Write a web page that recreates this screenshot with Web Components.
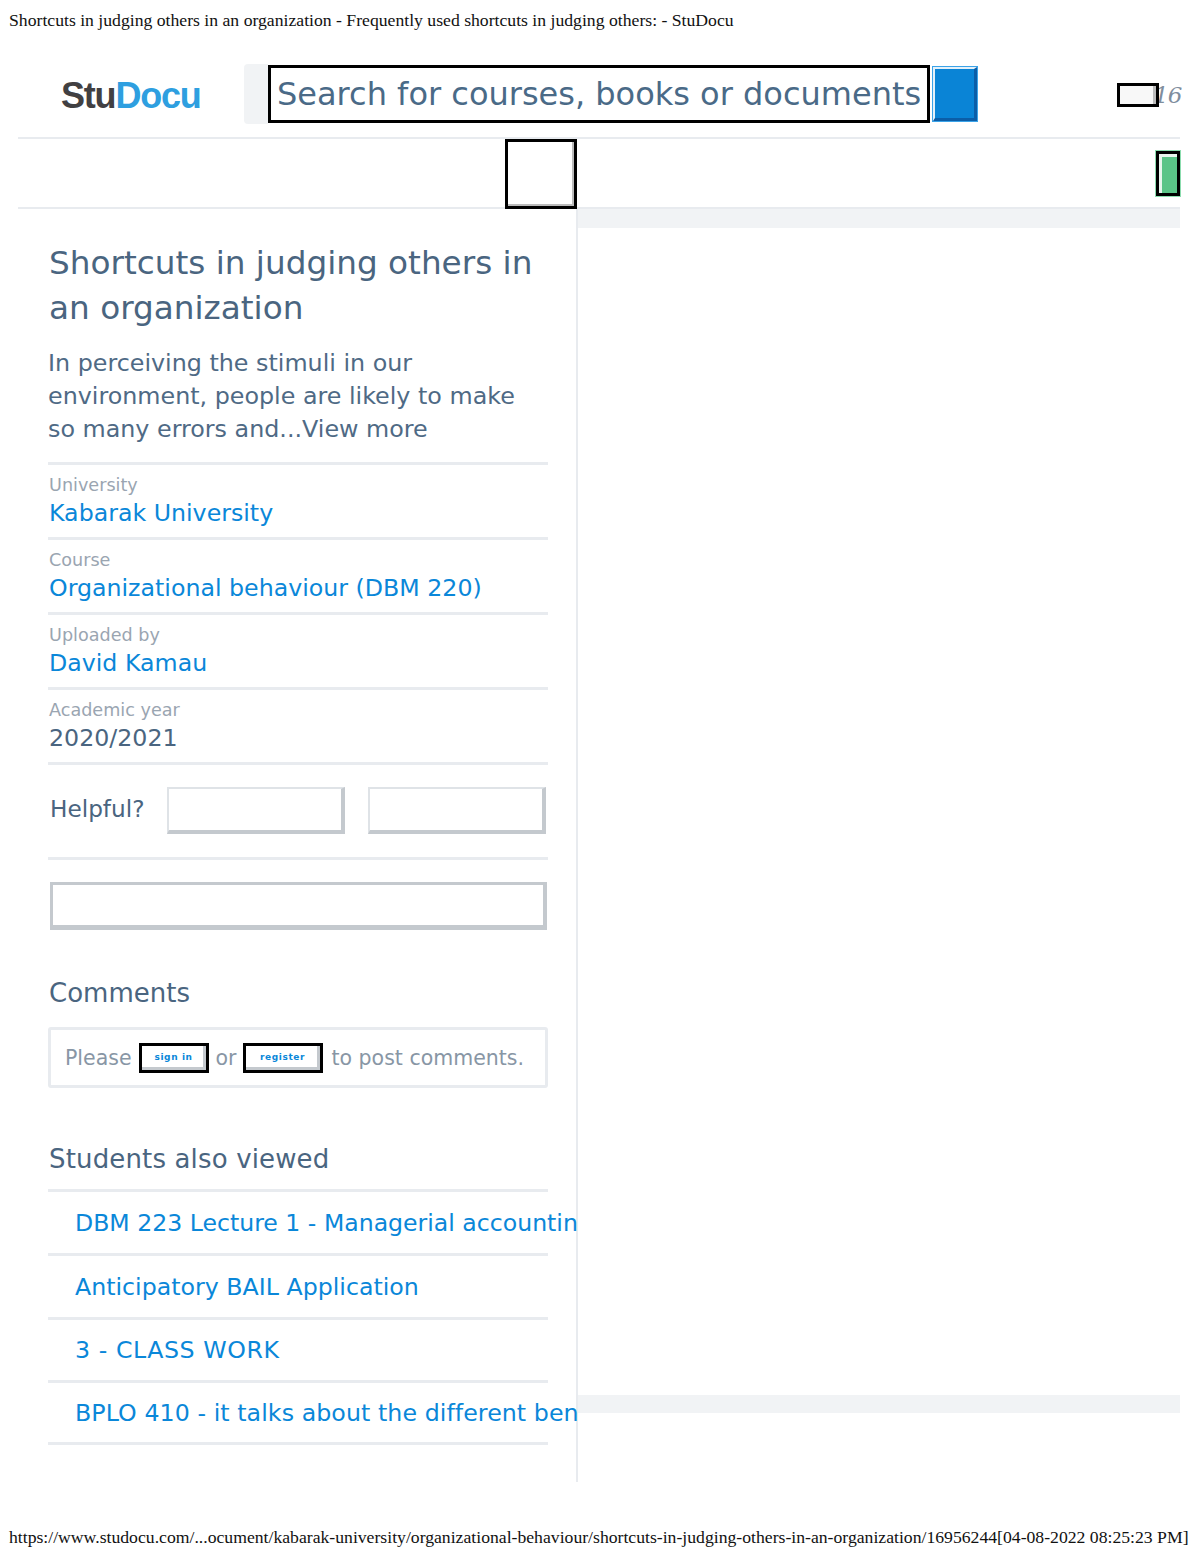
<!DOCTYPE html>
<html>
<head>
<meta charset="utf-8">
<title>Shortcuts in judging others in an organization - StuDocu</title>
<style>
	html, body { margin: 0; background: #fff; }
	body { width: 1200px; height: 1553px; overflow: hidden; font-family: "DejaVu Sans", sans-serif; color: #4a6580; display: flex; flex-direction: column; }
</style>
</head>
<body>
<print-line style="height:50px;padding-top:10px">Shortcuts in judging others in an organization - Frequently used shortcuts in judging others: - StuDocu</print-line>
<doc-frame>
	<site-header></site-header>
	<doc-toolbar></doc-toolbar>
	<doc-main>
		<doc-title slot="side">Shortcuts in judging others in an organization</doc-title>
		<doc-desc slot="side">In perceiving the stimuli in our environment, people are likely to make so many errors and...View more</doc-desc>
		<meta-row slot="side" label="University" link>Kabarak University</meta-row>
		<meta-row slot="side" label="Course" link>Organizational behaviour (DBM 220)</meta-row>
		<meta-row slot="side" label="Uploaded by" link>David Kamau</meta-row>
		<meta-row slot="side" label="Academic year">2020/2021</meta-row>
		<helpful-row slot="side"></helpful-row>
		<comment-box slot="side"></comment-box>
		<related-list slot="side">
			<related-item style="font-size:23.6px">DBM 223 Lecture 1 - Managerial accountin</related-item>
			<related-item>Anticipatory BAIL Application</related-item>
			<related-item style="height:63px;line-height:60px;letter-spacing:.55px">3 - CLASS WORK</related-item>
			<related-item style="height:62px;line-height:60px;letter-spacing:.07px">BPLO 410 - it talks about the different ben</related-item>
		</related-list>
	</doc-main>
</doc-frame>
<print-line style="margin-top:45px">https://www.studocu.com/...ocument/kabarak-university/organizational-behaviour/shortcuts-in-judging-others-in-an-organization/16956244[04-08-2022 08:25:23 PM]</print-line>

<script>
	// small helper, every element is just a shadow root with a style and some markup
	function comp(name, html) {
		customElements.define(name, class extends HTMLElement {
			constructor() {
				super();
				this.attachShadow({ mode: "open" });
			}
			connectedCallback() {
				this.shadowRoot.innerHTML = typeof html === "function" ? html(this) : html;
			}
		});
	}

	comp("print-line", `<style>
		:host { display: block; box-sizing: border-box; padding-left: 9px; font: 17.68px/20px "Liberation Serif", serif; color: #111; white-space: nowrap; }
	</style><slot></slot>`);

	comp("doc-frame", `<style>
		:host { display: block; margin: 0 20px 0 18px; }
	</style><slot></slot>`);

	comp("site-header", `<style>
		:host { display: flex; align-items: flex-start; height: 89px; padding-top: 14px; box-sizing: border-box; border-bottom: 2px solid #e8ebef; }
		.logo { width: 226px; padding-left: 43px; box-sizing: border-box; font: bold 36px/64px "Liberation Sans", sans-serif; letter-spacing: -1.2px; color: #414042; }
		.logo b { color: #2e9fe0; }
		.search { display: flex; padding-left: 24px; height: 60px; border-radius: 4px 0 0 4px; background: linear-gradient(#f1f3f5, #f1f3f5) left / 24px 100% no-repeat; }
		.input { width: 662px; height: 58px; box-sizing: border-box; margin-top: 1px; border: 3px solid #000; background: #fff; font-size: 32px; line-height: 53px; padding-left: 6px; color: #4a6a87; white-space: nowrap; overflow: hidden; }
		.go { width: 44px; height: 54px; margin: 3px 0 0 3px; box-sizing: border-box; background: #0a84d6; border-style: solid; border-width: 2px 3px 3px 2px; border-color: #e4f1fa #0b5ea8 #0b5ea8 #e4f1fa; outline: 1px solid #3ba3e8; }
		.pages { margin-left: auto; display: flex; align-items: center; height: 60px; padding-top: 1px; box-sizing: border-box; margin-right: -2px; }
		.box { width: 42px; height: 24px; box-sizing: border-box; border: 3px solid #000; background: #f8f8f8; box-shadow: inset -3px 0 0 #bbb; position: relative; z-index: 1; }
		.num { font: italic 23px "DejaVu Serif", serif; color: #7f8e9e; margin-left: -5px; letter-spacing: -1px; width: 28px; overflow: hidden; }
	</style>
	<div class="logo">Stu<b>Docu</b></div>
	<div class="search"><div class="input">Search for courses, books or documents</div><div class="go"></div></div>
	<div class="pages"><div class="box"></div><div class="num">16</div></div>`);

	comp("doc-toolbar", `<style>
		:host { display: flex; height: 70px; box-sizing: border-box; border-bottom: 2px solid #e8ebef; }
		.sq { width: 72px; height: 70px; margin-left: 487px; box-sizing: border-box; border: 3px solid #000; background: #fff; box-shadow: inset -2px -2px 0 #bbb; }
		.green { width: 24px; height: 45px; margin: 12px 0 0 auto; box-sizing: border-box; border: 3px solid #000; background: #5ac487; box-shadow: inset 3px 3px 0 #e8f5ed; outline: 1px solid #8bdcae; }
	</style><div class="sq"></div><div class="green"></div>`);

	comp("doc-main", `<style>
		:host { display: grid; grid-template-columns: 560px 1fr; height: 1273px; }
		.side { background: linear-gradient(#e8ebef, #e8ebef) right / 2px 100% no-repeat; padding: 31px 30px 0 30px; overflow: hidden; box-sizing: border-box; }
		.band { height: 19px; background: #f1f3f5; }
		.band.low { margin-top: 1167px; height: 18px; }
	</style>
	<div class="side"><slot name="side"></slot></div>
	<div class="view"><div class="band"></div><div class="band low"></div></div>`);

	comp("doc-title", `<style>
		:host { display: block; font-size: 32.7px; line-height: 45px; color: #4a6580; margin-bottom: 16px; padding: 1px 0 0 1px; }
	</style><slot></slot>`);

	comp("doc-desc", `<style>
		:host { display: block; font-size: 23.8px; line-height: 33px; color: #4f6a85; padding-bottom: 16px; border-bottom: 3px solid #e8ebef; padding-right: 20px; }
	</style><slot></slot>`);

	comp("meta-row", (el) => `<style>
		:host { display: block; height: 75px; box-sizing: border-box; border-bottom: 3px solid #e8ebef; padding: 7px 0 0 1px; }
		.l { font-size: 17.6px; line-height: 26px; color: #9aa5b1; }
		.v { font-size: 23.7px; line-height: 30px; color: ${el.hasAttribute("link") ? "#0a87d9" : "#4a6580"}; }
	</style><div class="l">${el.getAttribute("label")}</div><div class="v"><slot></slot></div>`);

	comp("helpful-row", `<style>
		:host { display: block; }
		.row { display: flex; align-items: center; height: 95px; box-sizing: border-box; border-bottom: 3px solid #e8ebef; padding: 0 2px 1px 2px; }
		.t { font-size: 23.2px; width: 117px; margin-top: -4px; color: #4a6580; }
		.b { height: 47px; box-sizing: border-box; background: #fff; border: 2px solid #dfe3e7; border-right: 4px solid #c4c9ce; border-bottom: 4px solid #c4c9ce; }
		.yes { width: 179px; margin-right: 23px; }
		.no { width: 178px; }
		.wide { display: block; height: 48px; margin: 22px 1px 0 2px; border-left-width: 3px; border-top: 3px solid #c4c9ce; border-left-color: #c4c9ce; border-bottom-width: 5px; }
	</style><div class="row"><div class="t">Helpful?</div><div class="b yes"></div><div class="b no"></div></div><div class="b wide"></div>`);

	comp("comment-box", `<style>
		:host { display: block; }
		h2 { font-weight: normal; font-size: 26px; line-height: 36px; margin: 45px 0 16px 1px; color: #4a6580; }
		.box { height: 61px; box-sizing: border-box; border: 3px solid #e8ebef; border-radius: 3px; display: flex; align-items: center; padding-left: 14px; font-size: 20.5px; color: #8896a5; white-space: nowrap; }
		.btn { display: inline-block; height: 30px; box-sizing: border-box; border: 3px solid #000; background: #fff; box-shadow: inset -3px -3px 0 #c4c9ce; font-size: 9px; line-height: 23px; font-weight: bold; text-align: center; color: #0a87d9; letter-spacing: 0.6px; }
		.si { width: 70px; margin: 0 7px; }
		.re { width: 80px; margin: 0 9px 0 6px; }
	</style><h2>Comments</h2><div class="box">Please<span class="btn si">sign in</span>or<span class="btn re">register</span>to post comments.</div>`);

	comp("related-list", `<style>
		:host { display: block; margin-right: -30px; }
		h2 { font-weight: normal; font-size: 26px; letter-spacing: 0.15px; line-height: 36px; margin: 53px 0 12px 1px; color: #4a6580; }
		.line { height: 3px; margin-right: 30px; background: #e8ebef; }
	</style><h2>Students also viewed</h2><div class="line"></div><slot></slot>`);

	comp("related-item", `<style>
		:host { display: block; height: 64px; box-sizing: border-box; padding-left: 27px; white-space: nowrap; overflow: hidden; font-size: 23.7px; line-height: 62px; color: #0a87d9; position: relative; }
		.rule { position: absolute; left: 0; right: 30px; bottom: 0; height: 3px; background: #e8ebef; }
	</style><slot></slot><div class="rule"></div>`);
</script>
</body>
</html>
